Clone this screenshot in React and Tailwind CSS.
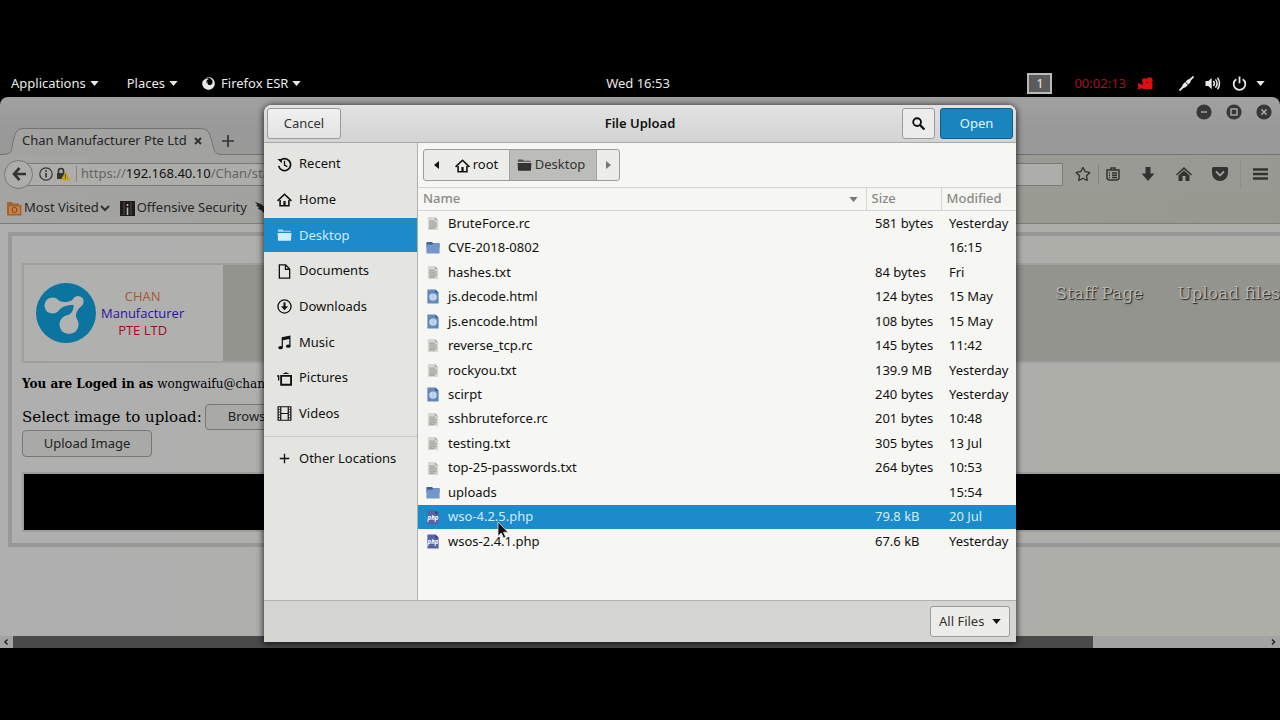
import { useState } from 'react';
import { FaFirefox, FaRegStar } from 'react-icons/fa';

const places = [
  { name: 'Recent', icon: 'recent' },
  { name: 'Home', icon: 'home' },
  { name: 'Desktop', icon: 'folder' },
  { name: 'Documents', icon: 'document' },
  { name: 'Downloads', icon: 'download' },
  { name: 'Music', icon: 'music' },
  { name: 'Pictures', icon: 'pictures' },
  { name: 'Videos', icon: 'video' },
];

const files = [
  { name: 'BruteForce.rc', type: 'text', size: '581 bytes', modified: 'Yesterday' },
  { name: 'CVE-2018-0802', type: 'folder', size: '', modified: '16:15' },
  { name: 'hashes.txt', type: 'text', size: '84 bytes', modified: 'Fri' },
  { name: 'js.decode.html', type: 'html', size: '124 bytes', modified: '15 May' },
  { name: 'js.encode.html', type: 'html', size: '108 bytes', modified: '15 May' },
  { name: 'reverse_tcp.rc', type: 'text', size: '145 bytes', modified: '11:42' },
  { name: 'rockyou.txt', type: 'text', size: '139.9 MB', modified: 'Yesterday' },
  { name: 'scirpt', type: 'html', size: '240 bytes', modified: 'Yesterday' },
  { name: 'sshbruteforce.rc', type: 'text', size: '201 bytes', modified: '10:48' },
  { name: 'testing.txt', type: 'text', size: '305 bytes', modified: '13 Jul' },
  { name: 'top-25-passwords.txt', type: 'text', size: '264 bytes', modified: '10:53' },
  { name: 'uploads', type: 'folder', size: '', modified: '15:54' },
  { name: 'wso-4.2.5.php', type: 'php', size: '79.8 kB', modified: '20 Jul' },
  { name: 'wsos-2.4.1.php', type: 'php', size: '67.6 kB', modified: 'Yesterday' },
];

function Caret({ className = '' }) {
  return (
    <svg viewBox="0 0 10 6" className={`h-[5px] w-[9px] shrink-0 ${className}`} fill="currentColor">
      <path d="M0 0h10L5 6z" />
    </svg>
  );
}

function PlaceIcon({ name }) {
  const line = { fill: 'none', stroke: 'currentColor', strokeWidth: 1.4 };
  return (
    <svg viewBox="0 0 16 16" className="h-[15px] w-[15px] shrink-0" fill="currentColor">
      {name === 'recent' && (
        <g {...line}>
          <path d="M3 4.2A6.4 6.4 0 1 1 1.8 9.5" strokeWidth="1.8" />
          <path d="M8 4v4.6l3 1.6" />
          <path d="M0.4 2.2h4.8v4.4z" fill="currentColor" stroke="none" />
        </g>
      )}
      {name === 'home' && (
        <g {...line} strokeWidth="1.7">
          <path d="M0.6 9.4 8 2.4l7.4 7" />
          <path d="M3.3 8.4v6.2h9.4V8.4" />
          <path d="M8 14.6V9.6" strokeWidth="2.4" />
        </g>
      )}
      {name === 'folder' && (
        <>
          <path d="M1 4V2.4c0-.5.3-.9.9-.9h4l1.4 1.3h6.8c.5 0 .9.4.9.9V4z" opacity=".8" />
          <path d="M0.6 5.2h14.8l-.5 8.5H1.1z" />
        </>
      )}
      {name === 'document' && (
        <g {...line}>
          <path d="M2.5.9h6.8l4.2 4.4v9.8h-11z" />
          <path d="M9 1v4.6h4.4" />
        </g>
      )}
      {name === 'download' && (
        <g {...line}>
          <circle cx="8" cy="8" r="7" />
          <path d="M8 3.6V9" strokeWidth="2.2" />
          <path d="M4.2 7.6h7.6L8 12z" fill="currentColor" stroke="none" />
        </g>
      )}
      {name === 'music' && (
        <>
          <path d="M5 2.4 14.4.6v11.2h-1.3V4.2L6.3 5.6v7.8H5z" />
          <ellipse cx="3.8" cy="13.5" rx="2.5" ry="1.8" />
          <ellipse cx="12" cy="11.9" rx="2.4" ry="1.8" />
        </>
      )}
      {name === 'pictures' && (
        <g {...line}>
          <path d="M4.4 5.2h10.6v9.4H4.4z" strokeWidth="2" />
          <path d="M5.8 3.2 9.6 1.2l3.8 2z" fill="currentColor" stroke="none" />
          <path d="M1.8 4.4v5.8M.2 4.8l1.8 1.6" />
        </g>
      )}
      {name === 'video' && (
        <g {...line} strokeWidth="1.3">
          <path d="M1.2.8h13.6v14.4H1.2zM4 1v14M12 1v14M4 8h8" />
          <path d="M1.2 3.6h2.6M1.2 6.4h2.6M1.2 9.4h2.6M1.2 12.4h2.6M12.2 3.6h2.6M12.2 6.4h2.6M12.2 9.4h2.6M12.2 12.4h2.6" strokeWidth="0.8" />
        </g>
      )}
      {name === 'plus' && <path d="M8 3v10M3 8h10" {...line} />}
    </svg>
  );
}

function FileIcon({ type }) {
  return (
    <svg viewBox="0 0 14 16" className="h-[15px] w-[14px] shrink-0">
      {type === 'text' && (
        <>
          <path d="M1.5 1h7.5l3.5 3.6V15h-11z" fill="#d6d6d2" />
          <path d="M9 1v3.6h3.5z" fill="#aaaaa6" />
          <path d="M3 5.5h6M3 7.5h8M3 9.5h8M3 11.5h8M3 13h6" stroke="#93938f" strokeWidth="1" />
        </>
      )}
      {type === 'folder' && (
        <>
          <path d="M0 2h6l1 1.4h7V8H0z" fill="#466396" />
          <path d="M0 5h6l1-1h7v10.5H0z" fill="#7396cd" />
        </>
      )}
      {type === 'html' && (
        <>
          <path d="M1 .5h8.5L13 4v11.5H1z" fill="#6189bb" />
          <path d="M9.5.5V4H13z" fill="#385a88" />
          <circle cx="7" cy="8.6" r="3.9" fill="#d4e4f5" />
          <path d="M3.4 8.6h7.2M7 4.8v7.6M4.4 6.4h5.2M4.4 10.8h5.2" stroke="#9cbbdd" strokeWidth=".7" />
        </>
      )}
      {type === 'php' && (
        <>
          <path d="M1 .5h8.5L13 4v11.5H1z" fill="#5763a4" />
          <path d="M9.5.5V4H13z" fill="#303b78" />
          <text x="7" y="10.5" textAnchor="middle" fontSize="6.5" fontWeight="bold" fontStyle="italic" fill="#fff">php</text>
        </>
      )}
    </svg>
  );
}

function TopBar() {
  return (
    <header className="flex h-[27px] items-center px-[11px] text-[13px] text-[#e8e8e8]">
      <nav className="flex flex-1 items-center">
        <button className="flex items-center gap-1">Applications <Caret /></button>
        <button className="ml-7 flex items-center gap-1">Places <Caret /></button>
        <button className="ml-6 flex items-center gap-1">
          <FaFirefox size={13} className="mr-[2px]" /> Firefox ESR <Caret />
        </button>
      </nav>
      <time>Wed 16:53</time>
      <div className="flex flex-1 items-center justify-end pr-1">
        <button className="h-[21px] w-[25px] border-2 border-[#b9b9b9] bg-[#5b5b5b] leading-none">1</button>
        <span className="ml-[22px] text-[#a8101c]">00:02:13</span>
        <svg viewBox="0 0 16 14" className="ml-3 h-[13px] w-[15px]" fill="#e00f12">
          <circle cx="7" cy="4" r="2.7" />
          <circle cx="12.5" cy="3.5" r="3.2" />
          <path d="M5 6.5h10.5V13H5V11.5L0 13.5V6.5l5 2z" />
        </svg>
        <svg viewBox="0 0 16 16" className="ml-[26px] h-[15px] w-[15px]" fill="currentColor">
          <path d="M.5 15.500 4.500 11.500M15.500.5 11.500 4.500" stroke="currentColor" strokeWidth="2" />
          <path d="M2.500 13.500 4 9 6.500 6.500l3 3-2.500 2.500zM13.500 2.500l-1.500 4.500-2 2-3-3 2-2z" />
        </svg>
        <svg viewBox="0 0 16 16" className="ml-[11px] h-[15px] w-[16px]" fill="none" stroke="currentColor" strokeWidth="1.6">
          <path d="M0 5.4h3L6.6 2v12L3 10.6H0z" fill="currentColor" stroke="none" />
          <path d="M8.4 5.4a4 4 0 0 1 0 5.2M10.6 3.6a7 7 0 0 1 0 8.8M12.8 1.8a10 10 0 0 1 0 12.4" />
        </svg>
        <svg viewBox="0 0 16 16" className="ml-[11px] h-[15px] w-[15px]" fill="none" stroke="currentColor" strokeWidth="1.9">
          <path d="M4.6 3.4a6.2 6.2 0 1 0 6.8 0M8 .6v7" />
        </svg>
        <Caret className="ml-[9px]" />
      </div>
    </header>
  );
}

function BrowserChrome() {
  return (
    <div className="text-[13px] text-[#262626]">
      <div className="flex h-[30px] items-center justify-end gap-[14px] rounded-t-lg bg-linear-to-b from-[#a1a1a1] to-[#999999] px-2">
        {['M5 8h6', 'M5 5h6v6H5z', 'm5.4 5.4 5.2 5.2m0-5.2-5.2 5.2'].map((d) => (
          <svg key={d} viewBox="0 0 16 16" className="h-4 w-4" fill="none" stroke="#a3a3a3" strokeWidth="1.5">
            <circle cx="8" cy="8" r="7.6" fill="#373737" stroke="none" />
            <path d={d} />
          </svg>
        ))}
      </div>

      <div className="flex h-[28px] items-center border-b border-[#757575] bg-[#999999]">
        <div className="relative flex h-[28px] w-[222px] items-center pl-[22px]">
          <svg viewBox="0 0 222 28" className="absolute inset-0 h-[28px] w-[222px]">
            <path d="M0 27.5C13 27.5 11 24 13 15S16 1.5 24 1.5H200C210 1.5 210 9 212 15S213 27.5 222 27.5V28H0z" fill="#a2a2a1" />
            <path d="M0 27.5C13 27.5 11 24 13 15S16 1.5 24 1.5H200C210 1.5 210 9 212 15S213 27.5 222 27.5" fill="none" stroke="#737373" />
          </svg>
          <span className="relative whitespace-nowrap">Chan Manufacturer Pte Ltd</span>
          <button aria-label="Close tab" className="absolute right-5">
            <svg viewBox="0 0 8 8" className="h-2 w-2" stroke="#333" strokeWidth="2"><path d="m1 1 6 6m0-6-6 6" /></svg>
          </button>
        </div>
        <button aria-label="New tab">
          <svg viewBox="0 0 12 12" className="h-3 w-3" stroke="#333" strokeWidth="1.7"><path d="M6 0v12M0 6h12" /></svg>
        </button>
      </div>

      <div className="flex h-[38px] items-center bg-linear-to-r from-[#a4a4a2] to-[#989993] px-1">
        <button aria-label="Back" className="z-10 flex h-[29px] w-[29px] shrink-0 items-center justify-center rounded-full border border-[#777] bg-[#adadab]">
          <svg viewBox="0 0 14 14" className="h-[14px] w-[14px]" fill="none" stroke="#333" strokeWidth="2.6">
            <path d="M7.5 1 2 7l5.5 6M2 7h12" />
          </svg>
        </button>
        <div className="-ml-3 flex h-[23px] flex-1 items-center border border-[#7b7b79] bg-[#adada9] pl-[17px]">
          <svg viewBox="0 0 14 14" className="h-[14px] w-[14px]" fill="none" stroke="#333" strokeWidth="1.2">
            <circle cx="7" cy="7" r="6.2" />
            <path d="M7 6v4.5M7 3.2v1.7" strokeWidth="1.6" />
          </svg>
          <svg viewBox="0 0 15 14" className="ml-[3px] h-[14px] w-[15px]">
            <path d="M2.5 6V4a2.5 2.5 0 0 1 5 0v2" fill="none" stroke="#333" strokeWidth="1.6" />
            <path d="M1 6h8v6H1z" fill="#333" />
            <path d="M9.5 4.5 14.5 13.5H4.5z" fill="#c9a21c" />
            <path d="M9.5 7.5v3M9.5 11.2v1" stroke="#5d4b10" />
          </svg>
          <span className="ml-[5px] h-4 w-px bg-[#858583]" />
          <span className="ml-1 flex-1 whitespace-nowrap text-[#666]">
            https://<span className="text-[#111]">192.168.40.10</span>/Chan/staff
          </span>
        </div>
        <div className="ml-3 flex items-center text-[#333331]">
          <button aria-label="Bookmark"><FaRegStar size={16} /></button>
          <span className="ml-[7px] h-5 w-px bg-[#868680]" />
          <button aria-label="Library" className="ml-[7px]">
            <svg viewBox="0 0 14 14" className="h-[14px] w-[14px]" fill="none" stroke="currentColor" strokeWidth="1.5">
              <path d="M1 3h12v8.5L11 13H3l-2-1.5zM5 3V1h4v2M3 6h1M6 6h5M3 8.2h1M6 8.2h5M3 10.5h1M6 10.5h5" />
            </svg>
          </button>
          <button aria-label="Downloads" className="ml-[21px]">
            <svg viewBox="0 0 14 14" className="h-[14px] w-[14px]" fill="currentColor"><path d="M4.5 0h5v6.5H13.5L7 14 .5 6.5h4z" /></svg>
          </button>
          <button aria-label="Home" className="ml-[21px]">
            <svg viewBox="0 0 16 14" className="h-[14px] w-[16px]" fill="currentColor">
              <path d="M0 7.5 8 0l8 7.5-1.1 1L8 2.2 1.1 8.5z" />
              <path d="M2.5 8.5 8 3.5l5.5 5V14H9.5V9h-3v5h-4z" />
            </svg>
          </button>
          <button aria-label="Pocket" className="ml-5">
            <svg viewBox="0 0 16 14" className="h-[14px] w-[16px]">
              <path d="M1.5 0h13Q16 0 16 1.5V6a8 8 0 0 1-16 0V1.5Q0 0 1.5 0z" fill="currentColor" />
              <path d="m4 4.5 4 4 4-4" fill="none" stroke="#a0a09c" strokeWidth="1.8" />
            </svg>
          </button>
          <span className="ml-3 h-7 w-px bg-[#8e8e88]" />
          <button aria-label="Menu" className="ml-3 mr-2">
            <svg viewBox="0 0 15 12" className="h-3 w-[15px]" stroke="currentColor" strokeWidth="2.4"><path d="M0 1.5h15M0 6h15M0 10.5h15" /></svg>
          </button>
        </div>
      </div>

      <div className="flex h-[31px] items-center overflow-hidden whitespace-nowrap border-b border-[#7f7f7a] bg-linear-to-r from-[#a4a4a2] to-[#97988f] pl-[7px]">
        <svg viewBox="0 0 15 15" className="h-[15px] w-[15px]">
          <path d="M0 1h5l1 1.5h6V4h2.5v10.5H0z" fill="#a3622a" />
          <path d="M2 5.5h11v7.5H2z" fill="#c2834c" />
          <circle cx="7.5" cy="9" r="2.5" fill="none" stroke="#7c4516" />
        </svg>
        <button className="ml-[2px] flex items-center">
          Most Visited
          <svg viewBox="0 0 10 7" className="ml-[1px] h-[7px] w-[10px]" fill="none" stroke="#333" strokeWidth="2"><path d="m1 1 4 4 4-4" /></svg>
        </button>
        <svg viewBox="0 0 15 15" className="ml-[10px] h-[15px] w-[15px]">
          <path d="M0 0h15v15H0z" fill="#1f1b1c" />
          <path d="M4 1v13M11 1v13" stroke="#57504f" strokeWidth="1" />
          <path d="M7.5 3v2M7.5 6.5V14" stroke="#b5b5b5" strokeWidth="1.6" />
        </svg>
        <a href="#offensive" className="ml-[2px]">Offensive Security</a>
        <svg viewBox="0 0 16 14" className="ml-2 h-[14px] w-[16px]" fill="#222"><path d="M0 1 6 3l6 5-2 5-4-4-3-1 1-1.5L1 4.5l1.5-.5z" /></svg>
      </div>
    </div>
  );
}

function WebPage() {
  return (
    <main className="flex-1 overflow-hidden bg-linear-to-r from-[#afafaf] to-[#adaea8] pl-2 pt-2 font-['DejaVu_Serif',serif] text-black">
      <div className="-mr-4 border-4 border-[#989896] px-[10px] pb-[11px] pt-[27px]">
        <div className="flex h-[100px] items-stretch border-2 border-[#a0a09e] bg-[#93948e]">
          <div className="flex w-[199px] items-center bg-[#b0b0ae] pl-[12px]">
            <svg viewBox="0 0 60 60" className="h-[60px] w-[60px]">
              <circle cx="30" cy="30" r="30" fill="#0b75a0" />
              <g fill="#b2b2b0">
                <circle cx="16.5" cy="22.500" r="8" />
                <circle cx="42" cy="18.500" r="5.600" />
                <circle cx="33" cy="41.500" r="9.600" />
                <path d="M20 15.500C23 19.500 31 20.500 37 16.500L40 22C34 21.500 26 22.500 22 28z" />
                <path d="M37.500 21.500 46 22.500C41 27 38.500 31 41 36.500L28 33.500C35 32 38 28 37.500 21.500z" />
              </g>
            </svg>
            <div className="ml-[5px] text-center font-['Open_Sans',sans-serif] text-[13px] leading-[17px]">
              <div className="text-[#a45a30]">CHAN</div>
              <div className="text-[#2b13a0]">Manufacturer</div>
              <div className="text-[#a00d20]">PTE LTD</div>
            </div>
          </div>
          <div className="flex flex-1 justify-end gap-[34px] whitespace-nowrap pt-[16px] text-[17px] text-[#b4b4b0] [text-shadow:1px_1px_1px_#222]">
            <a href="#staff">Staff Page</a>
            <a href="#upload">Upload files</a>
          </div>
        </div>
        <p className="mt-[11px] text-[12px] leading-5"><b>You are Loged in as</b> wongwaifu@chan.com</p>
        <div className="mt-[10px] flex items-center gap-[3px] text-[15px]">
          <span>Select image to upload:</span>
          <button className="h-[26px] rounded-sm border border-[#777] bg-[#a9a9a7] px-[22px] font-['Noto_Sans',sans-serif] text-[13px] text-[#222]">Browse...</button>
        </div>
        <button className="block h-[27px] w-[130px] rounded-sm border border-[#777] bg-[#a9a9a7] font-['Noto_Sans',sans-serif] text-[13px] text-[#222]">Upload Image</button>
        <div className="mt-[15px] h-[60px] border-2 border-[#9d9d9b] bg-black" />
      </div>
    </main>
  );
}

function FileDialog() {
  const [place, setPlace] = useState('Desktop');
  const [selected, setSelected] = useState('wso-4.2.5.php');

  return (
    <section role="dialog" aria-label="File Upload" className="relative flex w-[752px] flex-col overflow-hidden rounded-t-lg bg-[#f6f6f2] text-[13px] text-[#111] shadow-[0_1px_6px_1px_rgba(0,0,0,0.7)]">
      <div className="flex h-[38px] items-center border-b border-[#a9a9a9] bg-linear-to-b from-[#e2e2e2] to-[#d3d3d3] px-[3px]">
        <div className="flex flex-1">
          <button className="h-[31px] w-[74px] rounded-[3px] border border-[#9a9a9a] bg-linear-to-b from-[#f0f0f0] to-[#e4e4e4] text-[#333]">Cancel</button>
        </div>
        <h1 className="font-semibold">File Upload</h1>
        <div className="flex flex-1 justify-end gap-[5px]">
          <button aria-label="Search" className="flex h-[31px] w-[33px] items-center justify-center rounded-[3px] border border-[#9a9a9a] bg-[#ececec]">
            <svg viewBox="0 0 14 14" className="h-[13px] w-[13px]" fill="none" stroke="#111" strokeWidth="2"><circle cx="5.5" cy="5.5" r="4.2" /><path d="m8.5 8.5 5 5" strokeWidth="2.4" /></svg>
          </button>
          <button className="h-[31px] w-[73px] rounded-[3px] border border-[#0d5f90] bg-[#1a84bf] text-[#e6f4fb]">Open</button>
        </div>
      </div>

      <div className="flex flex-1">
        <aside className="w-[154px] shrink-0 border-r border-[#b0b0ae] bg-[#e4e5e0] pt-1">
          <ul className="flex h-[284px] flex-col justify-between">
            {places.map((item) => (
              <li key={item.name}>
                <button
                  onClick={() => setPlace(item.name)}
                  className={`flex h-[34px] w-full items-center gap-[7px] pl-[13px] ${
                    place === item.name ? 'bg-[#1b8bcb] text-[#d5ecf9]' : 'text-[#111]'
                  }`}
                >
                  <PlaceIcon name={item.icon} />
                  {item.name}
                </button>
              </li>
            ))}
          </ul>
          <button className="mt-[5px] flex h-[44px] w-full items-center gap-[7px] border-t border-[#c8c8c4] pl-[13px]">
            <PlaceIcon name="plus" />
            Other Locations
          </button>
        </aside>

        <div className="flex-1">
          <div className="flex h-[44px] items-center px-[5px]">
            <div className="flex h-[32px] items-stretch rounded-[3px] border border-[#9c9c9a] bg-[#ecece8]">
              <button aria-label="Scroll left" className="flex w-[24px] items-center justify-center">
                <svg viewBox="0 0 5 8" className="h-2 w-[5px]"><path d="M5 0v8L0 4z" fill="#111" /></svg>
              </button>
              <button className="flex w-[61px] items-center justify-center gap-[3px] pr-1"><PlaceIcon name="home" />root</button>
              <button className="flex w-[88px] items-center justify-center gap-[3px] border-x border-[#a4a4a2] bg-[#bcbcba] pr-1 text-[#333]"><PlaceIcon name="folder" />Desktop</button>
              <button aria-label="Scroll right" className="flex w-[22px] items-center justify-center">
                <svg viewBox="0 0 5 8" className="h-2 w-[5px]"><path d="M0 0v8l5-4z" fill="#777" /></svg>
              </button>
            </div>
          </div>

          <table className="h-[367px] w-full table-fixed border-collapse text-left whitespace-nowrap">
            <thead className="text-[#8a8a88]">
              <tr className="h-[23px] border-y border-[#d5d5d1]">
                <th className="pl-[5px] font-medium">
                  <span className="flex items-center justify-between pr-2">Name <Caret className="text-[#777]" /></span>
                </th>
                <th className="w-[75px] border-l border-[#d5d5d1] pl-[5px] font-medium">Size</th>
                <th className="w-[75px] border-l border-[#d5d5d1] pl-[5px] font-medium">Modified</th>
              </tr>
            </thead>
            <tbody>
              {files.map((file) => (
                <tr
                  key={file.name}
                  onClick={() => setSelected(file.name)}
                  className={selected === file.name ? 'bg-[#1b8bcb] text-[#d5ecf9]' : ''}
                >
                  <td className="pl-2">
                    <span className="flex items-center gap-2"><FileIcon type={file.type} />{file.name}</span>
                  </td>
                  <td className="pl-[9px]">{file.size}</td>
                  <td className="pl-2">{file.modified}</td>
                </tr>
              ))}
            </tbody>
          </table>
        </div>
      </div>

      <footer className="flex h-[42px] items-center justify-end border-t border-[#b0b0ae] bg-[#d5d6d1] pr-[6px]">
        <label className="relative flex items-center">
          <select aria-label="File type" className="h-[31px] w-[80px] appearance-none rounded-[3px] border border-[#9c9c9a] bg-[#ecece9] pl-2 text-[#333]">
            <option>All Files</option>
          </select>
          <Caret className="pointer-events-none absolute right-[9px]" />
        </label>
      </footer>

      <svg viewBox="0 0 12 18" className="pointer-events-none absolute left-[233px] top-[416px] h-[18px] w-[12px]">
        <path d="M1 1v14l3.3-3 2.2 5 2.2-1-2.2-4.8H11z" fill="#111" stroke="#ddd" strokeWidth=".8" />
      </svg>
    </section>
  );
}

export default function App() {
  return (
    <div className="flex min-h-screen flex-col bg-black pb-[72px] pt-[70px] font-['Noto_Sans',sans-serif]">
      <TopBar />
      <div className="relative flex flex-1 flex-col overflow-hidden">
        <BrowserChrome />
        <WebPage />
        <div className="flex h-[12px] items-center bg-[#a3a3a3]">
          <svg viewBox="0 0 13 12" className="h-3 w-[13px]" fill="none" stroke="#222" strokeWidth="1.5"><path d="M7.5 3.5 5 6l2.5 2.5" /></svg>
          <div className="flex h-full flex-1 bg-[#4a4a4a]" />
          <div className="h-full w-[174px]" />
          <svg viewBox="0 0 13 12" className="h-3 w-[13px]" fill="none" stroke="#222" strokeWidth="1.5"><path d="M5 3.5 7.5 6 5 8.500" /></svg>
        </div>
        <div className="absolute inset-0 flex justify-center pb-[6px] pt-2">
          <FileDialog />
        </div>
      </div>
    </div>
  );
}
